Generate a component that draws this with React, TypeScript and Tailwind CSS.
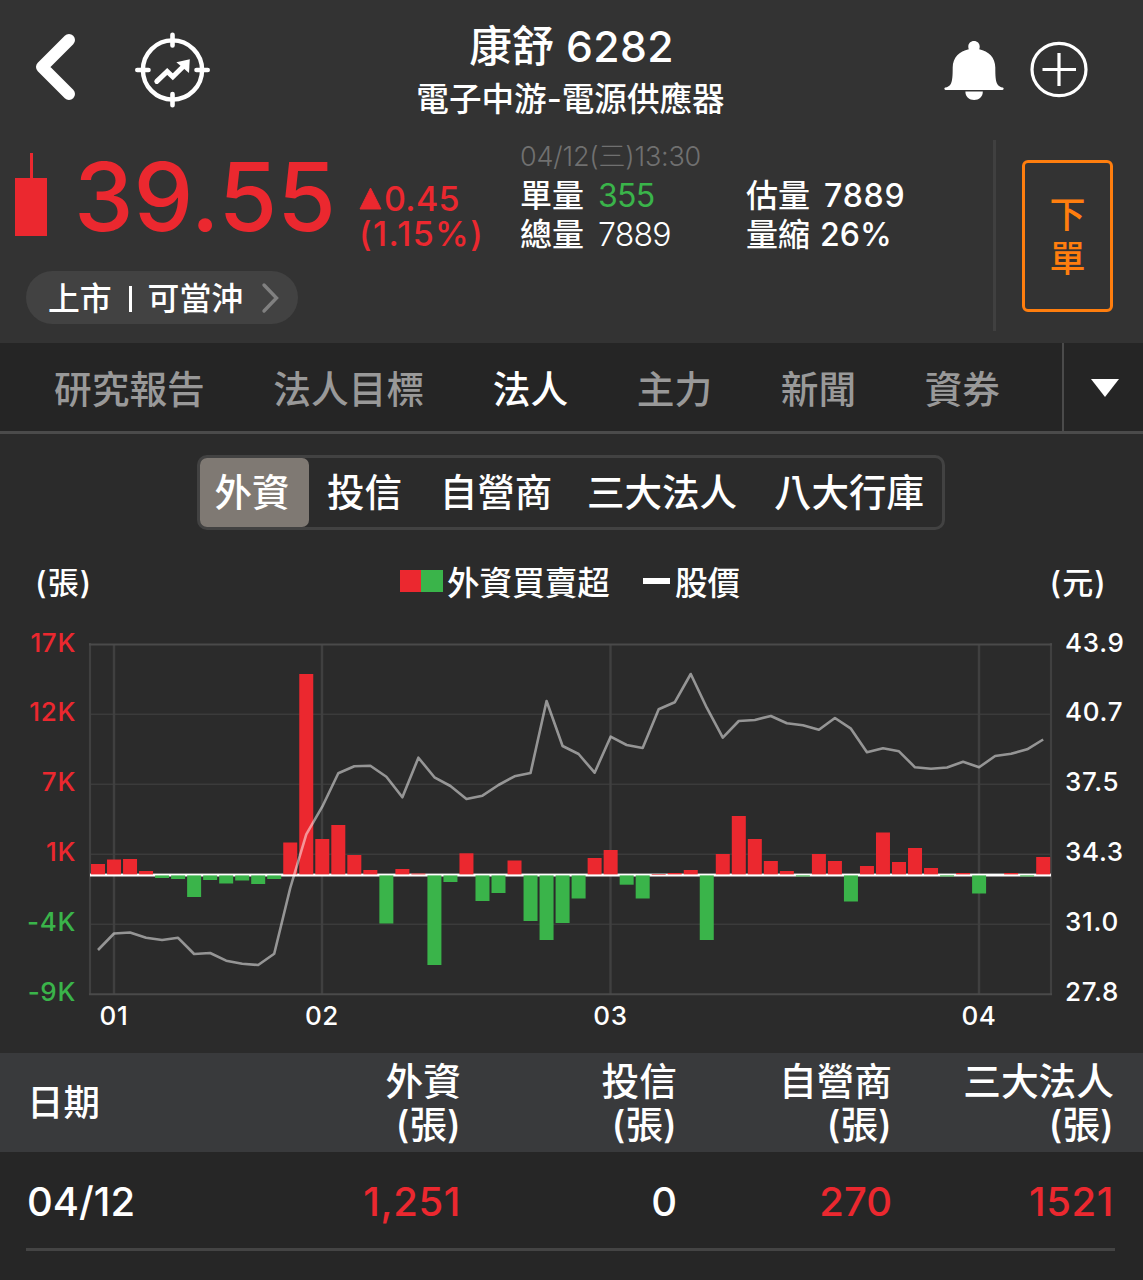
import React from "react";

const RED = "#eb282f";
const GREEN = "#3ab44a";

const mainTabs = ["研究報告", "法人目標", "法人", "主力", "新聞", "資券"];

const investors = [
    { name: "外資", style: "w-[109px] pr-[5px] bg-[#7f7973]" },
    { name: "投信", style: "w-[111px]" },
    { name: "自營商", style: "w-[152px]" },
    { name: "三大法人", style: "w-[180px]" },
    { name: "八大行庫", style: "w-[194px]" },
];

// bar heights, positive = net buy, negative = net sell
const bars = [
    11, 15.5, 16, 4, -3, -4, -22, -5, -8.5, -5.5, -9, -4, 32.5, 201, 36, 50, 20, 5, -48.5, 6,
    1.5, -90, -7, 21.7, -26, -18, 14.5, -46, -65, -48, -23.5, 17, 25, -9.7, -23.5, 1, 2, 5, -65, 21,
    59, 36, 14, 4, -1.5, 21, 14, -26.5, 9, 42.5, 13, 27, 7, -1.5, 2, -18.5, 0, 2, -1.5, 18,
];

const prices = [
    950, 933.5, 932.5, 937.7, 940, 937.8, 954, 953, 960.7, 963.7, 965, 953.7, 888, 834.3, 806.7,
    773.3, 766.3, 765.7, 776.7, 797.3, 757.7, 777.3, 786, 799, 795.7, 785, 776.3, 773, 701, 746,
    754, 772.7, 736.7, 745, 748, 709.3, 702.3, 674, 707.7, 737.7, 721, 720, 716, 723.3, 725.3,
    729.7, 718, 728.7, 752.3, 748.3, 751.3, 767.3, 768.7, 767.5, 761.7, 767.3, 756, 753.7, 749.3, 739.5,
];

const axis = [
    { left: "17K", right: "43.9", color: RED },
    { left: "12K", right: "40.7", color: RED },
    { left: "7K", right: "37.5", color: RED },
    { left: "1K", right: "34.3", color: RED },
    { left: "-4K", right: "31.0", color: GREEN },
    { left: "-9K", right: "27.8", color: GREEN },
];

const months = [
    { label: "01", x: 114 },
    { label: "02", x: 322 },
    { label: "03", x: 610.5 },
    { label: "04", x: 979 },
];

const barX = (i: number) => 98 + i * 16.02;

const BackIcon = () => (
    <svg width="42" height="70" viewBox="0 0 42 70" fill="none">
        <path d="M35 8L8 35L35 62" stroke="#fff" strokeWidth="12" strokeLinecap="round" strokeLinejoin="round" />
    </svg>
);

const TargetIcon = () => (
    <svg width="76" height="76" viewBox="0 0 76 76" fill="none" stroke="#fff" strokeWidth="4.6" strokeLinecap="round">
        <circle cx="37.5" cy="38" r="29.6" strokeWidth="4.4" />
        <path d="M37.5 2.8V13.5M37.5 62V73.2M2.3 38H13.5M61.5 38H72.7" />
        <path d="M21.8 49.4L32.2 39.4L37.8 44.8L49 33.8" strokeWidth="5" />
        <path d="M41.4 30.2L54.8 27.2L54 41Z" fill="#fff" stroke="none" />
    </svg>
);

const BellIcon = () => (
    <svg width="60" height="60" viewBox="0 0 60 60" fill="#fff">
        <path d="M30 0C33.3 0 35.7 2.4 35.7 5.6C35.7 6.6 35.6 7.5 35.2 8.3C44.5 10.2 51.3 16.5 51.3 26.5C51.3 35 51.6 39.5 53 42.5C54.2 45 56.5 46.2 58.8 46.6C60 47 60 49 58.5 49H1.5C0 49 0 47 1.2 46.6C3.5 46.2 5.8 45 7 42.5C8.4 39.5 8.7 35 8.7 26.5C8.7 16.5 15.5 10.2 24.8 8.3C24.4 7.5 24.3 6.6 24.3 5.6C24.3 2.4 26.7 0 30 0Z" />
        <path d="M21.4 50.5H38.8C38.8 56 35 59 30.1 59C25.2 59 21.4 56 21.4 50.5Z" />
    </svg>
);

const PlusIcon = () => (
    <svg width="58" height="58" viewBox="0 0 58 58" fill="none" stroke="#fff" strokeWidth="3.2">
        <ellipse cx="29" cy="28.5" rx="27" ry="26.2" />
        <path d="M12.5 28.5H46M29 12V45" />
    </svg>
);

const Header = () => (
    <header className="h-[343px] bg-[#333333]">
        <div className="flex h-[140px] justify-between pt-[24px]">
            <div className="flex w-[300px] items-start gap-[59px] pl-[34px] pt-[8px]">
                <BackIcon />
                <TargetIcon />
            </div>
            <div className="flex flex-col items-center whitespace-nowrap">
                <h1 className="text-[42.7px] font-medium leading-[46px]">
                    康舒 <span className="tracking-[0.4px]">6282</span>
                </h1>
                <h2 className="mt-[9px] pr-[2px] text-[32.6px] font-medium leading-[40px]">電子中游-電源供應器</h2>
            </div>
            <div className="flex w-[300px] justify-end gap-[26px] pr-[55px] pt-[17px]">
                <BellIcon />
                <PlusIcon />
            </div>
        </div>

        <div className="flex h-[203px]">
            <div className="w-[520px]">
                <div className="flex h-[131px]">
                    <svg className="ml-[15px] mt-[13px]" width="33" height="84" fill={RED}>
                        <path d="M15 0H18V25H32V83H0V25H15Z" />
                    </svg>
                    <div className="ml-[26px] w-[285px] pt-[10px] text-[95px] font-medium leading-[94px] text-[#eb282f]">
                        39.55
                    </div>
                    <div className="pt-[41px] text-[34px] font-medium leading-[35px] text-[#eb282f]">
                        <div className="flex items-center gap-[2px] tracking-[0.3px]">
                            <svg width="23" height="23" fill={RED}>
                                <path d="M11.5 1L22 22H1Z" stroke={RED} strokeLinejoin="round" />
                            </svg>
                            0.45
                        </div>
                        <div className="tracking-[1.4px]">(1.15%)</div>
                    </div>
                </div>
                <div className="ml-[26px] flex h-[53px] w-[272px] items-center rounded-full bg-[#424242] pl-[22px] text-[31.8px] font-medium">
                    <span className="pt-[2px]">上市</span>
                    <span className="ml-[17px] mr-[16px] mt-[3px] h-[26px] w-[3px] bg-white" />
                    <span className="pt-[2px]">可當沖</span>
                    <svg className="ml-[18px]" width="19" height="32" fill="none">
                        <path d="M3 3L15.5 16L3 29" stroke="#808080" strokeWidth="3.4" strokeLinecap="round" />
                    </svg>
                </div>
            </div>

            <div className="w-[473px] text-[32px] font-medium">
                <div className="h-[36px] text-[27px] font-light leading-[34px] tracking-[-0.2px] text-[#707070]">
                    04/12(三)13:30
                </div>
                <div className="flex h-[39px] items-center">
                    <span>單量</span>
                    <span className="ml-[14px] w-[148px] font-normal tracking-[-0.7px] text-[#3ab44a]">355</span>
                    <span>估量</span>
                    <span className="ml-[14px] tracking-[0.8px]">7889</span>
                </div>
                <div className="flex h-[39px] items-center">
                    <span>總量</span>
                    <span className="ml-[14px] w-[148px] font-light tracking-[-0.8px]">7889</span>
                    <span>量縮</span>
                    <span className="ml-[10px]">26%</span>
                </div>
            </div>

            <div className="h-[191px] w-[3px] bg-[#404040]" />
            <button className="ml-[26px] mt-[20px] flex h-[152px] w-[91px] flex-col items-center justify-center rounded-md border-[3px] border-[#ff7e0e] pt-[2px] text-[36px] font-medium leading-[44px] text-[#ff7e0e]">
                <span>下</span>
                <span>單</span>
            </button>
        </div>
    </header>
);

const Tabs = () => (
    <nav className="flex h-[91px] border-b-[3px] border-[#4b4b4b] bg-[#252525]">
        <div className="flex flex-1 items-center gap-[68.6px] whitespace-nowrap pl-[54px] pt-[4px] text-[37.7px] text-[#999999]">
            {mainTabs.map((tab) => (
                <span key={tab} className={tab === "法人" ? "font-medium text-white" : "font-medium"}>
                    {tab}
                </span>
            ))}
        </div>
        <div className="flex w-[81px] items-center border-l-2 border-[#4b4b4b] pl-[27px] pt-[2px]">
            <svg width="28" height="18" fill="#fff">
                <path d="M0 0H28L14 18Z" />
            </svg>
        </div>
    </nav>
);

const Chart = () => (
    <svg className="block" width="1143" height="435" viewBox="0 618 1143 435">
        <g stroke="#3b3b3b" strokeWidth="1.6">
            {[714.2, 784.2, 854.2, 924.2].map((y) => (
                <line key={y} x1="90" x2="1051" y1={y} y2={y} />
            ))}
        </g>
        <g stroke="#404040" strokeWidth="2.4">
            {months.map((m) => (
                <line key={m.label} x1={m.x} x2={m.x} y1="644" y2="994" />
            ))}
        </g>
        <path d="M90 643V995M1051 643V995" stroke="#404040" strokeWidth="2.2" />
        <path d="M89 644.4H1052M89 994.2H1052" stroke="#4a4a4a" strokeWidth="2" />
        <rect x="90" y="873.6" width="961" height="2.9" fill="#fff" />
        {bars.map((h, i) =>
            h > 0 ? (
                <rect key={i} x={barX(i) - 7} y={875 - h} width="14" height={Math.max(h - 0.6, 0.6)} fill={RED} />
            ) : (
                <rect key={i} x={barX(i) - 7} y="875.4" width="14" height={Math.max(-h - 0.4, 0)} fill={GREEN} />
            )
        )}
        <polyline
            points={prices.map((y, i) => `${barX(i)},${y}`).join(" ")}
            fill="none"
            stroke="#fff"
            strokeOpacity="0.5"
            strokeWidth="2.6"
            strokeLinejoin="round"
        />
        <g fontSize="26" fontWeight="500" letterSpacing="0.7">
            {axis.map((a, i) => (
                <g key={a.left}>
                    <text x="76" y={651.6 + i * 69.8} textAnchor="end" fill={a.color}>
                        {a.left}
                    </text>
                    <text x="1065" y={651.6 + i * 69.8} fill="#fff">
                        {a.right}
                    </text>
                </g>
            ))}
            {months.map((m) => (
                <text key={m.label} x={m.x} y="1025.3" textAnchor="middle" fill="#fff">
                    {m.label}
                </text>
            ))}
        </g>
    </svg>
);

const ChartPanel = () => (
    <section className="h-[619px] bg-[#2b2b2b] pt-[21px]">
        <div className="ml-[197px] flex h-[75px] w-[748px] rounded-[10px] border-[3px] border-[#424242] text-[37.5px] font-medium">
            {investors.map((item) => (
                <div key={item.name} className={`${item.style} flex shrink-0 items-center justify-center whitespace-nowrap rounded-[7px] pt-[2px]`}>
                    {item.name}
                </div>
            ))}
        </div>
        <div className="flex h-[88px] items-center pt-[18px] text-[32.6px] font-medium">
            <span className="w-[365px] pl-[35px] text-[31px] tracking-[1.2px]">(張)</span>
            <span className="mb-[4px] ml-[35px] h-[22px] w-[21px] bg-[#eb282f]" />
            <span className="mb-[4px] h-[22px] w-[22px] bg-[#3ab44a]" />
            <span className="ml-[4px]">外資買賣超</span>
            <span className="mb-[4px] ml-[33px] h-[6px] w-[27px] bg-white" />
            <span className="ml-[5px]">股價</span>
            <span className="ml-auto pr-[36px] text-[31px] tracking-[1.2px]">(元)</span>
        </div>
        <Chart />
    </section>
);

const columns = [
    { name: "外資", value: "1,251", width: "w-[261px]", color: "text-[#eb282f] tracking-[0.6px]" },
    { name: "投信", value: "0", width: "w-[216px]", color: "text-white" },
    { name: "自營商", value: "270", width: "w-[215px]", color: "text-[#eb282f]" },
    { name: "三大法人", value: "1521", width: "w-[222px]", color: "text-[#eb282f] tracking-[0.6px]" },
];

const Table = () => (
    <section className="h-[227px] bg-[#262626] font-medium">
        <div className="flex h-[99px] items-center bg-[#393a3c] pt-[1px] text-[37.7px] leading-[43px]">
            <span className="w-[200px] pl-[27px] pt-[1px] text-[36.5px]">日期</span>
            {columns.map((c) => (
                <div key={c.name} className={`${c.width} whitespace-nowrap text-right`}>
                    <div>{c.name}</div>
                    <div>(張)</div>
                </div>
            ))}
        </div>
        <div className="ml-[26px] mr-[28px] flex h-[99px] items-center border-b-[3px] border-[#444444] pt-[4px] text-[40px]">
            <span className="w-[174px] shrink-0 pl-px">04/12</span>
            {columns.map((c) => (
                <span key={c.name} className={`${c.width} ${c.color} shrink-0 text-right`}>
                    {c.value}
                </span>
            ))}
        </div>
    </section>
);

export default function App() {
    return (
        <div className="h-[1280px] w-[1143px] overflow-hidden bg-[#262626] font-['Inter','Noto_Sans_CJK_TC',sans-serif] text-white">
            <Header />
            <Tabs />
            <ChartPanel />
            <Table />
        </div>
    );
}
